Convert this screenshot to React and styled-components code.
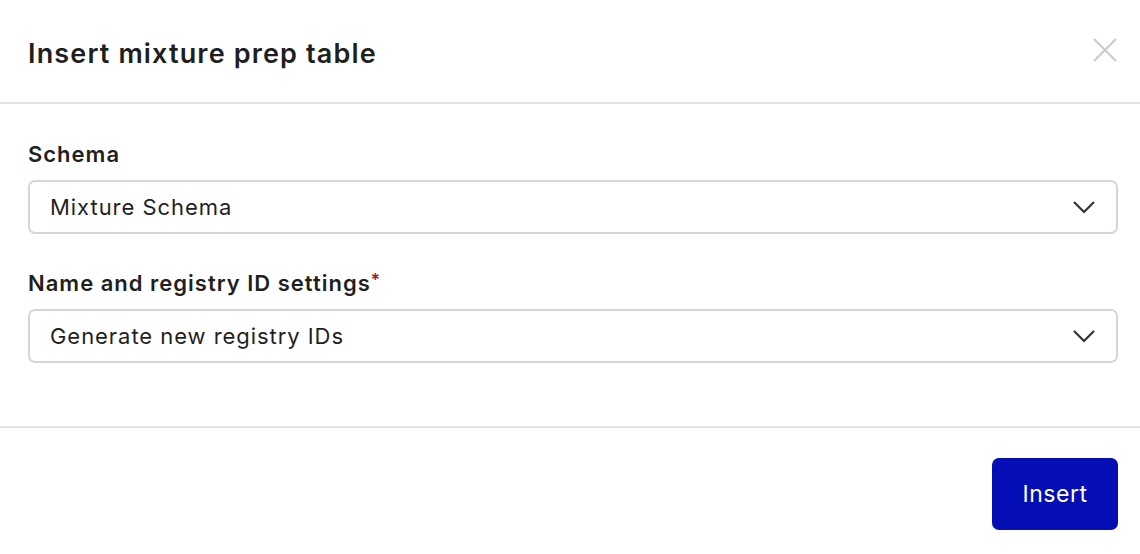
import styled, { createGlobalStyle } from "styled-components";

const GlobalStyle = createGlobalStyle`
  body {
    margin: 0;
    background: #fff;
    font-family: "Inter", "Liberation Sans", sans-serif;
    color: #1f1f1f;
  }
`;

const Dialog = styled.div`
  width: 1140px;
  height: 554px;
  display: flex;
  flex-direction: column;
  background: #fff;
`;

const Header = styled.div`
  height: 104px;
  display: flex;
  align-items: center;
  justify-content: space-between;
  padding: 4px 23px 0 28px;
  border-bottom: 2px solid #e3e3e3;
  box-sizing: border-box;
`;

const Title = styled.h1`
  margin: 0;
  font-size: 27px;
  font-weight: 600;
  letter-spacing: 1.15px;
  color: #1f1f1f;
`;

const CloseBtn = styled.button`
  border: none;
  background: none;
  padding: 0;
  width: 24px;
  height: 24px;
  display: flex;
  margin-top: -6px;
  cursor: pointer;
`;

const Body = styled.div`
  padding: 37px 22px 0 28px;
  height: 324px;
  box-sizing: border-box;
  display: flex;
  flex-direction: column;
  gap: 36px;
  border-bottom: 2px solid #e3e3e3;
`;

const Field = styled.div`
  display: flex;
  flex-direction: column;
  gap: 13px;
`;

const Label = styled.label`
  font-size: 22px;
  font-weight: 600;
  letter-spacing: 1px;
  color: #1f1f1f;
  line-height: 26px;
`;

const Required = styled.span`
  color: #9c1c1c;
  font-size: 17px;
  vertical-align: top;
  line-height: 20px;
`;

const Select = styled.div`
  height: 54px;
  flex-shrink: 0;
  box-sizing: border-box;
  border: 2px solid #d6d6d6;
  border-radius: 7px;
  display: flex;
  align-items: center;
  justify-content: space-between;
  padding: 0 20px 0 20px;
  font-size: 22px;
  letter-spacing: 0.95px;
  color: #1f1f1f;
`;

const Footer = styled.div`
  flex: 1;
  display: flex;
  justify-content: flex-end;
  align-items: flex-start;
  padding: 30px 22px 0 0;
`;

const PrimaryButton = styled.button`
  width: 126px;
  height: 72px;
  border: none;
  border-radius: 7px;
  background: #050db5;
  color: #fff;
  font-family: inherit;
  font-size: 23px;
  letter-spacing: 0.5px;
  cursor: pointer;
`;

const Chevron = () => (
  <svg width="24" height="14" viewBox="0 0 24 14" fill="none">
    <path d="M2 2l10 10 10-10" stroke="#333" strokeWidth="2.2" />
  </svg>
);

const CloseIcon = () => (
  <svg width="24" height="24" viewBox="0 0 24 24" fill="none">
    <path d="M1 1l22 22M23 1L1 23" stroke="#cbcbcb" strokeWidth="2.2" />
  </svg>
);

function SelectField({ label, value, required }) {
  return (
    <Field>
      <Label>
        {label}
        {required && <Required>*</Required>}
      </Label>
      <Select>
        <span>{value}</span>
        <Chevron />
      </Select>
    </Field>
  );
}

export default function App() {
  return (
    <>
      <GlobalStyle />
      <Dialog>
        <Header>
          <Title>Insert mixture prep table</Title>
          <CloseBtn aria-label="Close">
            <CloseIcon />
          </CloseBtn>
        </Header>
        <Body>
          <SelectField label="Schema" value="Mixture Schema" />
          <SelectField
            label="Name and registry ID settings"
            value="Generate new registry IDs"
            required
          />
        </Body>
        <Footer>
          <PrimaryButton>Insert</PrimaryButton>
        </Footer>
      </Dialog>
    </>
  );
}
